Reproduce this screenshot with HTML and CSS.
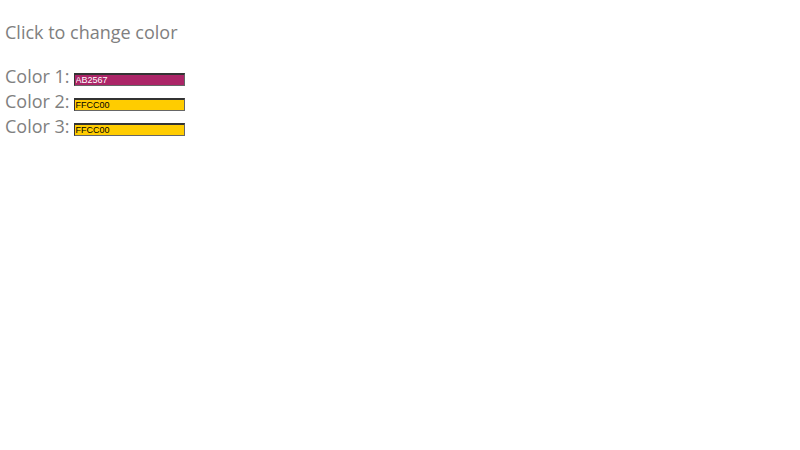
FILE: index.html
```html
<!DOCTYPE html>
<html lang="en">
<head>
    <meta charset="UTF-8">
    <meta name="viewport" content="width=device-width, initial-scale=1.0">
    <title>Color Picker</title>
    <link rel="stylesheet" href="styles.css">
</head>
<body>
    <p class="intro">Click to change color</p>

    <div class="row">
        <label for="color1">Color 1:</label>
        <input type="text" id="color1" class="color color-berry" value="AB2567">
    </div>
    <div class="row">
        <label for="color2">Color 2:</label>
        <input type="text" id="color2" class="color" value="FFCC00">
    </div>
    <div class="row">
        <label for="color3">Color 3:</label>
        <input type="text" id="color3" class="color" value="FFCC00">
    </div>
</body>
</html>
```
FILE: styles.css
```css
body {
    margin: 0;
    padding: 20px 5px;
    background-color: #fff;
    color: #808080;
    font-family: "Open Sans", "Noto Sans", sans-serif;
    font-size: 18px;
    line-height: 25px;
}

.intro {
    margin: 0 0 19px;
}

.row {
    display: flex;
    align-items: center;
    gap: 4px;
}

.color {
    box-sizing: border-box;
    width: 111px;
    height: 13px;
    margin: 6px 0 0;
    padding: 0 1px;
    border: 1px solid #666;
    border-top: 2px solid #333;
    border-left-color: #333;
    background-color: #ffcc00;
    color: #000;
    font-family: "Liberation Sans", Arial, sans-serif;
    font-size: 9px;
    line-height: 10px;
}

.color-berry {
    background-color: #ab2567;
    color: #fff;
}
```
